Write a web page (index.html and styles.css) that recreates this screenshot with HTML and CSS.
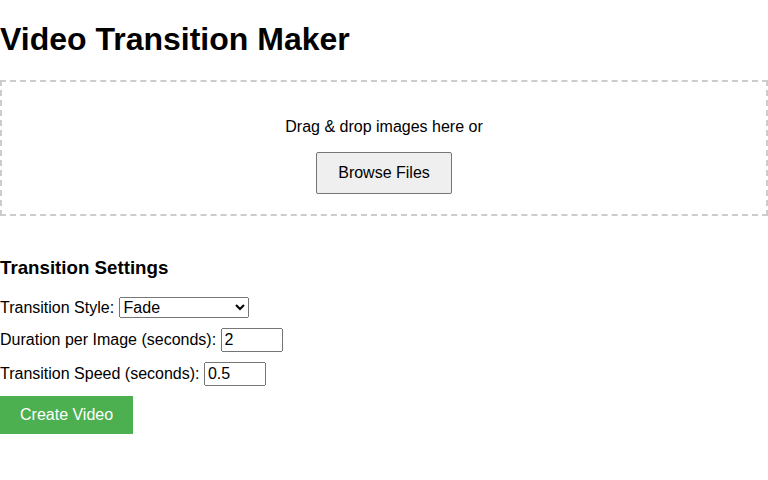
FILE: index.html
```html
<!DOCTYPE html>
<html>
<head>
<meta charset="utf-8">
<link rel="stylesheet" href="styles.css">
</head>
<body>
<h1 class="title">Video Transition Maker</h1>
<div class="drop-zone">
  <p class="drop-text">Drag &amp; drop images here or</p>
  <button class="browse-btn">Browse Files</button>
</div>
<div class="settings">
  <h3 class="settings-title">Transition Settings</h3>
  <div class="row">
    <label>Transition Style:</label>
    <select class="style-select">
      <option>Fade</option>
      <option>Slide</option>
      <option>Zoom</option>
    </select>
  </div>
  <div class="row">
    <label>Duration per Image (seconds):</label>
    <input class="num-input" type="text" value="2">
  </div>
  <div class="row">
    <label>Transition Speed (seconds):</label>
    <input class="num-input" type="text" value="0.5">
  </div>
  <button class="create-btn">Create Video</button>
</div>
</body>
</html>
```
FILE: styles.css
```css
body {
  margin: 0;
  font-family: "Liberation Sans", Arial, sans-serif;
  font-size: 16px;
  color: #000;
  background: #fff;
}
.title {
  font-size: 32px;
  margin: 21.44px 0;
}
.drop-zone {
  border: 2px dashed #ccc;
  padding: 20px;
  text-align: center;
  margin-bottom: 20px;
}
.drop-text {
  margin: 16px 0;
}
.browse-btn {
  font-family: "Liberation Sans", Arial, sans-serif;
  font-size: 16px;
  padding: 10px 21px;
  background: #efefef;
  border: 1px solid #767676;
  border-radius: 2px;
  color: #000;
  line-height: 20px;
}
.settings {
  padding-top: 2px;
}
.settings-title {
  font-size: 18.72px;
  margin: 18.72px 0;
}
.row {
  margin-bottom: 10px;
}
.style-select {
  font-family: "Liberation Sans", Arial, sans-serif;
  font-size: 16px;
  width: 130px;
}
.num-input {
  font-family: "Liberation Sans", Arial, sans-serif;
  font-size: 16px;
  width: 62px;
  box-sizing: border-box;
}
.create-btn {
  font-family: "Liberation Sans", Arial, sans-serif;
  font-size: 16px;
  padding: 10px 20px;
  background: #4caf50;
  color: #fff;
  border: none;
}
```
